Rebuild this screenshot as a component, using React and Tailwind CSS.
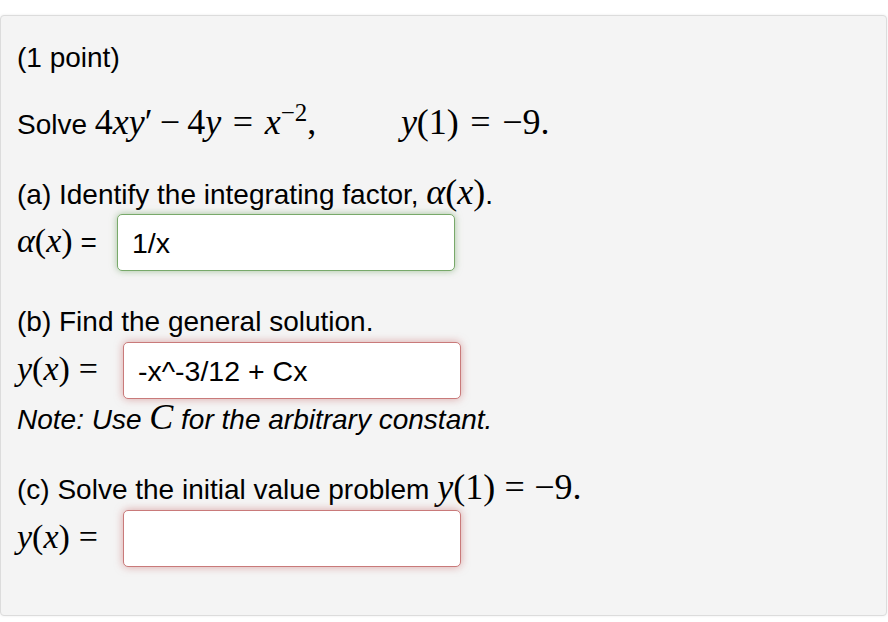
import React from "react";

const SANS = { fontFamily: '"Liberation Sans", Arial, Helvetica, sans-serif' };
const SERIF = { fontFamily: '"Liberation Serif", "Times New Roman", serif' };

function M({ children, className = "text-[36px]" }) {
  return (
    <span className={"leading-[0] " + className} style={SERIF}>
      {children}
    </span>
  );
}

function V({ children }) {
  return <i className="italic">{children}</i>;
}

function Bin({ children }) {
  return <span className="mx-[0.2em]">{children}</span>;
}
function Rel({ children }) {
  return <span className="mx-[0.32em]">{children}</span>;
}

function Field({ value, ok }) {
  return (
    <div
      className={
        "box-border h-[57px] w-[338px] rounded-[5px] border-[1.5px] bg-white pl-[14px] flex items-center text-[28.5px] text-black " +
        (ok
          ? "border-[#78a96a] shadow-[0_0_7px_rgba(110,160,95,0.6)]"
          : "border-[#c97a7a] shadow-[0_0_8px_rgba(200,110,110,0.6)]")
      }
      style={SANS}
    >
      {value}
    </div>
  );
}

export default function App() {
  return (
    <div className="w-[888px] h-[622px] bg-white pt-[15px] overflow-hidden" style={SANS}>
      <div className="box-border h-[601px] w-[887px] rounded-[4px] border border-[#dcdcdc] bg-[#f4f4f4] shadow-[0_0_3px_rgba(0,0,0,0.08)] pl-[16px] pt-[26px] text-black text-[28px] leading-[32px]">
        <div>(1 point)</div>

        <div className="mt-[35px] whitespace-nowrap">
          Solve{" "}
          <M>
            4<V>x</V>
            <V>y</V>′<Bin>−</Bin>4<V>y</V>
            <Rel>=</Rel>
            <V>x</V>
            <span className="text-[25px] relative top-[-13px] leading-[0]">−2</span>,
            <span className="ml-[2.35em]">
              <V>y</V>(1)<Rel>=</Rel>−9.
            </span>
          </M>
        </div>

        <div className="mt-[38px] whitespace-nowrap">
          (a) Identify the integrating factor,{" "}
          <M>
            <V>α</V>(<V>x</V>)
          </M>
          .
        </div>

        <div className="mt-[3px] flex items-center h-[57px]">
          <div className="w-[100px] whitespace-nowrap">
            <M className="text-[34px]">
              <V>α</V>(<V>x</V>)
            </M>{" "}
            =
          </div>
          <Field value="1/x" ok />
        </div>

        <div className="mt-[35px] whitespace-nowrap">(b) Find the general solution.</div>

        <div className="mt-[4px] flex items-center h-[57px]">
          <div className="w-[106px] whitespace-nowrap">
            <M className="text-[34px]">
              <V>y</V>(<V>x</V>)<span className="mx-[0.26em]">=</span>
            </M>
          </div>
          <Field value="-x^-3/12 + Cx" />
        </div>

        <div className="mt-[5px] italic whitespace-nowrap">
          Note: Use{" "}
          <M>
            <V>C</V>
          </M>{" "}
          for the arbitrary constant.
        </div>

        <div className="mt-[38px] whitespace-nowrap">
          (c) Solve the initial value problem{" "}
          <M>
            <V>y</V>(1)<span className="mx-[0.26em]">=</span>−9.
          </M>
        </div>

        <div className="mt-[4px] flex items-center h-[57px]">
          <div className="w-[106px] whitespace-nowrap">
            <M className="text-[34px]">
              <V>y</V>(<V>x</V>)<span className="mx-[0.26em]">=</span>
            </M>
          </div>
          <Field value="" />
        </div>
      </div>
    </div>
  );
}
